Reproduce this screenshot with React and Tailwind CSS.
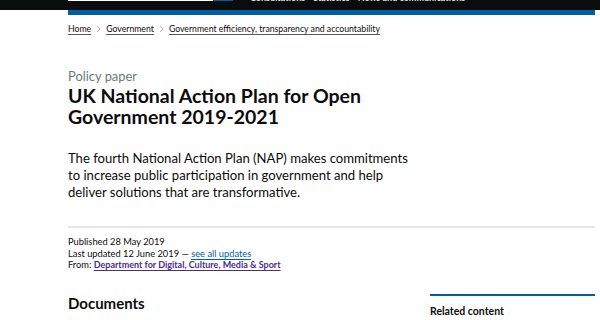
import React from "react";

const font = { fontFamily: 'Lato, "Liberation Sans", Arial, sans-serif' };

function Header() {
  return (
    <div>
      <div className="bg-[#0b0c0c] h-[10px] overflow-hidden">
        <div className="ml-[68px] w-[527px] flex items-end h-[10px]">
          <div className="flex self-start -mt-[20px]">
            <div className="w-[145px] h-[21px] bg-white"></div>
            <div className="w-[20px] h-[21px] bg-[#005ea5]"></div>
          </div>
          <nav className="ml-[17px] self-start -mt-[8px] flex gap-[8px] text-[9px] font-bold text-[#dedede] leading-[11px]">
            <span>Consultations</span>
            <span>Statistics</span>
            <span>News and communications</span>
          </nav>
        </div>
      </div>
      <div className="ml-[68px] w-[527px] h-[5px] bg-[#005ea5]"></div>
    </div>
  );
}

function Chevron() {
  return (
    <svg width="5" height="8" viewBox="0 0 5 8" className="mx-[5px]">
      <path d="M1 1l3 3-3 3" fill="none" stroke="#b1b4b6" strokeWidth="1" />
    </svg>
  );
}

function Breadcrumbs() {
  const items = ["Home", "Government", "Government efficiency, transparency and accountability"];
  return (
    <ol className="flex items-center mt-[8px] text-[8.7px] leading-[12px] text-[#0b0c0c]">
      {items.map((item, i) => (
        <li key={item} className="flex items-center">
          {i > 0 && <Chevron />}
          <a className="underline decoration-[#505a5f] underline-offset-2">{item}</a>
        </li>
      ))}
    </ol>
  );
}

export default function App() {
  return (
    <div className="w-[600px] h-[320px] overflow-hidden bg-white text-[#0b0c0c]" style={font}>
      <Header />
      <div className="ml-[68px] w-[527px]">
        <Breadcrumbs />

        <div className="mt-[34px]">
          <span className="block text-[12.9px] leading-[15px] text-[#6f777b]">Policy paper</span>
          <h1 className="mt-[1px] text-[19.5px] leading-[21px] font-bold w-[360px]">
            UK National Action Plan for Open Government 2019-2021
          </h1>
        </div>

        <p className="mt-[23px] text-[13.1px] leading-[17px] w-[345px]">
          The fourth National Action Plan (NAP) makes commitments to increase public
          participation in government and help deliver solutions that are transformative.
        </p>

        <div className="mt-[25px] border-t-2 border-[#e4e5e6] pt-[8px] text-[9.3px] leading-[11.5px]">
          <p>Published 28 May 2019</p>
          <p>
            Last updated 12 June 2019 —{" "}
            <a className="text-[#005ea5] underline underline-offset-2">see all updates</a>
          </p>
          <p>
            From:{" "}
            <a className="font-bold text-[9px] text-[#4c2c92] underline underline-offset-2">
              Department for Digital, Culture, Media &amp; Sport
            </a>
          </p>
        </div>

        <div className="flex mt-[22px]">
          <div className="w-[362px]">
            <h2 className="mt-[1px] text-[15px] leading-[18px] font-bold">Documents</h2>
          </div>
          <aside className="w-[165px]">
            <div className="mt-[1px] border-t-2 border-[#005ea5] pt-[9px]">
              <h2 className="text-[10.5px] leading-[13px] font-bold">Related content</h2>
            </div>
          </aside>
        </div>
      </div>
    </div>
  );
}
